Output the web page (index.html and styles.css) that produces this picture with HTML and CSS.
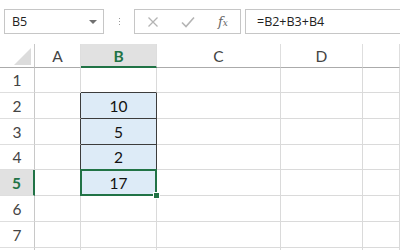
FILE: index.html
```html
<!DOCTYPE html>
<html lang="en">
<head>
    <meta charset="UTF-8">
    <title>Sheet</title>
    <link rel="stylesheet" href="styles.css">
</head>
<body>

    <div class="formula-bar">
        <div class="name-box">
            <span>B5</span>
            <svg class="drop" width="8" height="4" viewBox="0 0 8 4"><path d="M0 0H8L4 4Z" fill="#707070"/></svg>
        </div>
        <div class="grip"><i></i><i></i><i></i></div>
        <div class="fx-buttons">
            <svg width="12" height="12" viewBox="0 0 12 12"><path d="M1.5 1.5L10.5 10.5M10.5 1.5L1.5 10.5" stroke="#b4b4b4" stroke-width="1.3" fill="none"/></svg>
            <svg width="14" height="12" viewBox="0 0 14 12"><path d="M1 6.5L5 10.5L13 1.5" stroke="#b4b4b4" stroke-width="1.6" fill="none"/></svg>
            <span class="fx">f<sub>x</sub></span>
        </div>
        <div class="formula-input">=B2+B3+B4</div>
    </div>

    <div class="sheet">
        <div class="hd corner"><svg width="17" height="17" viewBox="0 0 17 17"><path d="M17 0V17H0Z" fill="#dcdcdc"/></svg></div>
        <div class="hd col">A</div>
        <div class="hd col active">B</div>
        <div class="hd col">C</div>
        <div class="hd col">D</div>
        <div class="hd col"></div>

        <div class="hd row">1</div>
        <div class="c"></div><div class="c top"></div><div class="c"></div><div class="c"></div><div class="c"></div>

        <div class="hd row">2</div>
        <div class="c left"></div><div class="c val">10</div><div class="c"></div><div class="c"></div><div class="c"></div>

        <div class="hd row">3</div>
        <div class="c left"></div><div class="c val">5</div><div class="c"></div><div class="c"></div><div class="c"></div>

        <div class="hd row">4</div>
        <div class="c left"></div><div class="c val">2</div><div class="c"></div><div class="c"></div><div class="c"></div>

        <div class="hd row active">5</div>
        <div class="c"></div><div class="c fill sel">17</div><div class="c"></div><div class="c"></div><div class="c"></div>

        <div class="hd row">6</div>
        <div class="c"></div><div class="c"></div><div class="c"></div><div class="c"></div><div class="c"></div>

        <div class="hd row">7</div>
        <div class="c"></div><div class="c"></div><div class="c"></div><div class="c"></div><div class="c"></div>

        <div class="hd row edge"></div>
        <div class="c edge"></div><div class="c edge"></div><div class="c edge"></div><div class="c edge"></div><div class="c edge"></div>
    </div>

</body>
</html>
```

FILE: styles.css
```css
body {
    margin: 0;
    width: 400px;
    height: 250px;
    overflow: hidden;
    background: #fff;
    font-family: Lato, 'Liberation Sans', sans-serif;
}

.formula-bar {
    display: flex;
    align-items: flex-start;
    height: 44px;
    padding-top: 9px;
    box-sizing: border-box;
    font-family: 'Open Sans', sans-serif;
    font-size: 12.5px;
    color: #222;
}

.name-box {
    display: flex;
    align-items: center;
    justify-content: space-between;
    width: 100px;
    height: 25px;
    margin-left: 4px;
    padding: 0 6px 0 7px;
    box-sizing: border-box;
    border: 1px solid #c6c6c6;
}

.grip {
    display: flex;
    flex-direction: column;
    align-items: center;
    gap: 2px;
    width: 30px;
    padding-top: 9px;
}

.grip i {
    width: 1px;
    height: 1px;
    background: #9a9a9a;
}

.fx-buttons {
    display: flex;
    align-items: center;
    gap: 22px;
    width: 107px;
    height: 25px;
    padding-left: 12px;
    box-sizing: border-box;
    border: 1px solid #c6c6c6;
}

.fx {
    font-family: 'DejaVu Serif', serif;
    font-style: italic;
    font-size: 13px;
    color: #666;
    margin-left: 1px;
}

.fx sub {
    font-size: 9px;
    vertical-align: 0;
}

.formula-input {
    flex: 1;
    height: 25px;
    margin-left: 4px;
    padding-left: 11px;
    box-sizing: border-box;
    border: 1px solid #c6c6c6;
    border-right: none;
    line-height: 23px;
}

.sheet {
    display: grid;
    grid-template-columns: 35px 46px 76px 124px 82px 1fr;
    grid-template-rows: 24px 25px 26px 26px 25px 26px 26px 26px 2px;
    font-size: 15.5px;
    color: #444;
}

.sheet > div {
    display: flex;
    align-items: center;
    justify-content: center;
    box-sizing: border-box;
}

.hd.col {
    border-right: 1px solid #dedede;
    border-bottom: 1px solid #ababab;
    padding-top: 1px;
}

.hd.row {
    border-right: 1px solid #c8c8c8;
    border-bottom: 1px solid #dedede;
}

.hd.corner {
    justify-content: flex-end;
    align-items: flex-end;
    padding: 0 3px 2px 0;
    border-right: 1px solid #c8c8c8;
    border-bottom: 1px solid #ababab;
}

.hd.active {
    background: #e1e1e1;
    color: #217346;
    font-weight: bold;
}

.hd.col.active {
    border-bottom: 2px solid #217346;
}

.hd.row.active {
    border-right: 2px solid #217346;
}

.c {
    border-right: 1px solid #dadada;
    border-bottom: 1px solid #dadada;
    color: #111;
}

.sheet > .edge {
    border-bottom: none;
}

.c.top {
    border-bottom-color: #3c3c3c;
}

.c.left {
    border-right-color: #3c3c3c;
}

.c.val {
    background: #ddebf7;
    border-right-color: #3c3c3c;
    border-bottom-color: #3c3c3c;
}

.c.fill {
    background: #ddebf7;
}

.sel {
    position: relative;
}

.sel::before {
    content: '';
    position: absolute;
    inset: -1px;
    border: 2px solid #217346;
}

.sel::after {
    content: '';
    position: absolute;
    right: -4px;
    bottom: -4px;
    width: 5px;
    height: 5px;
    background: #217346;
    border: 1px solid #fff;
}
```
